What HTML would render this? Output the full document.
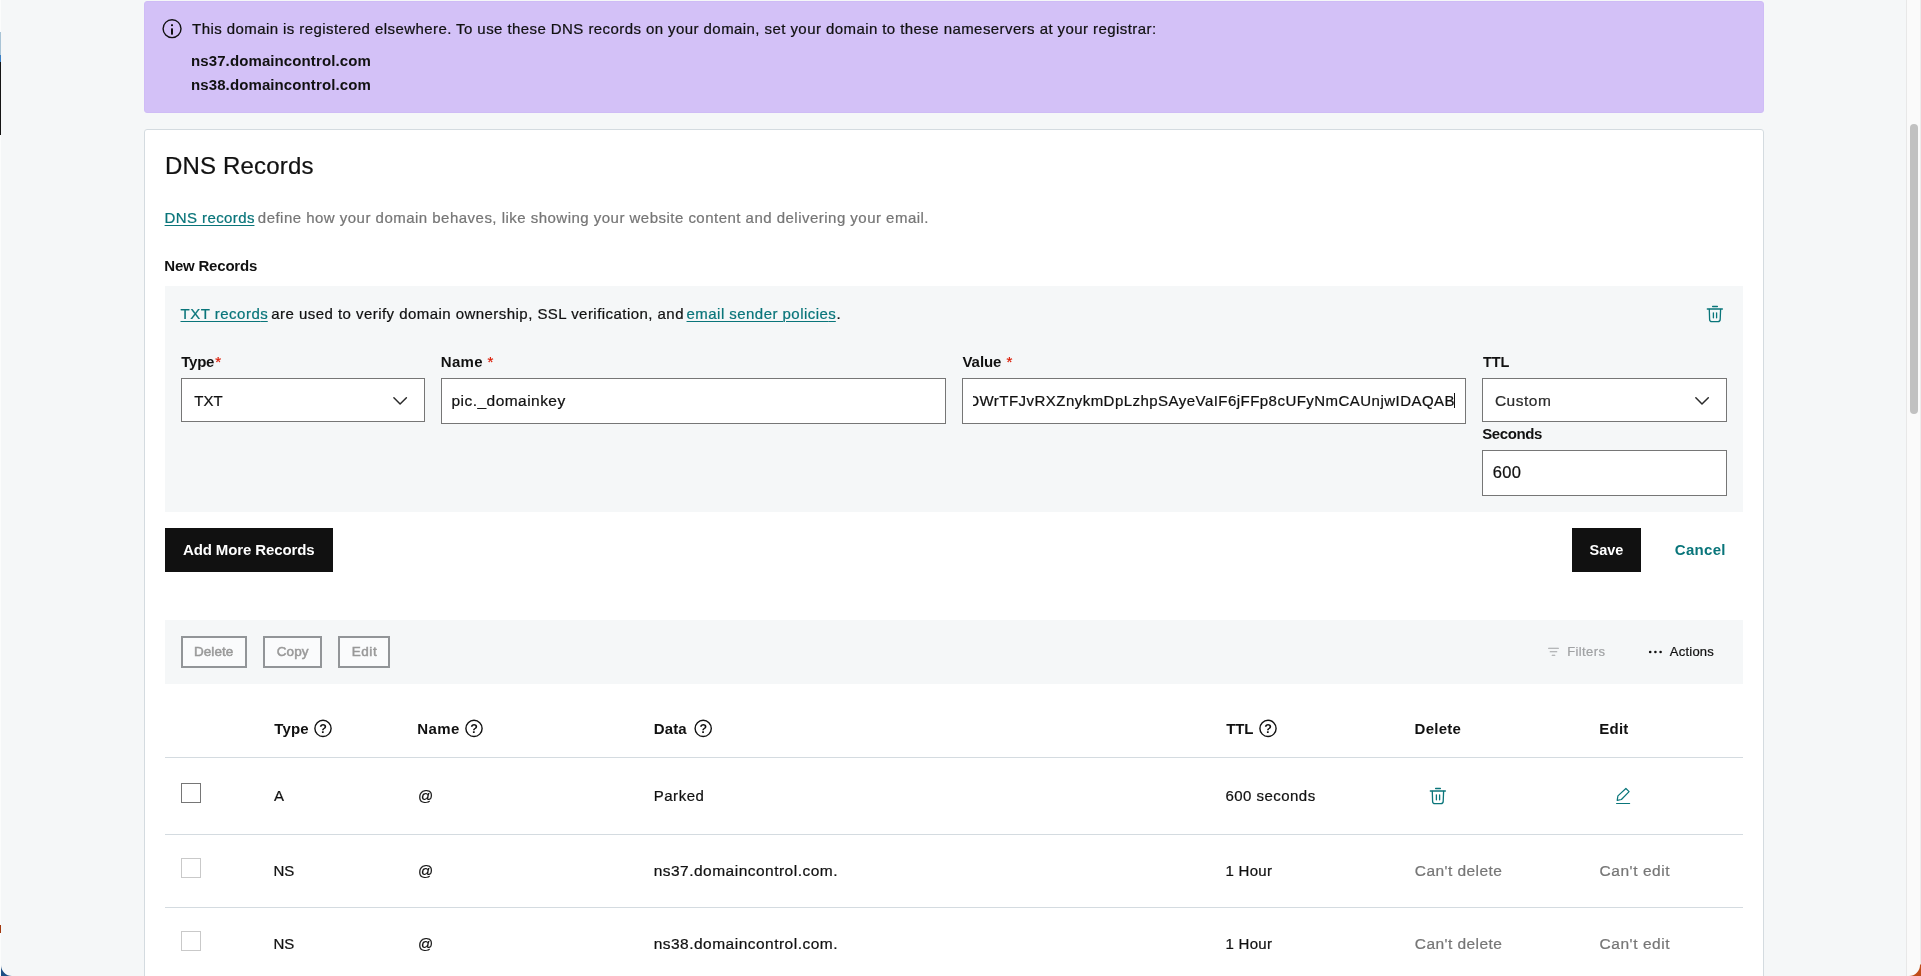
<!DOCTYPE html>
<html lang="en">
<head>
<meta charset="utf-8">
<title>DNS Records</title>
<style>
*{box-sizing:border-box;margin:0;padding:0}
html,body{width:1921px;height:976px;overflow:hidden;background:#f5f7f8}
body{position:relative;font-family:"Liberation Sans",Arial,sans-serif;color:#111;-webkit-font-smoothing:antialiased}
#page{position:absolute;left:0;top:0;width:1921px;height:976px;overflow:hidden;will-change:transform}
.abs,.t,.box{position:absolute}
.t{white-space:pre;margin:0;font-weight:400;display:block;-webkit-text-stroke:0.22px currentColor}
.l{letter-spacing:0}
.t.b{-webkit-text-stroke:0}
a.t{color:#09757a}
.banner{left:144px;top:1px;width:1620px;height:112px;background:#d3c1f7;border:1px solid #cfbcf6;border-radius:3px}
.card{left:144px;top:129px;width:1620px;height:900px;background:#fff;border:1px solid #d4dbe0;border-radius:3px}
.panel{left:165px;top:286px;width:1578px;height:226px;background:#f5f7f8}
.field{background:#fff;border:1px solid #767676}
.btn{background:#111}
.toolbar{left:165px;top:620px;width:1578px;height:64px;background:#f5f7f8}
.obtn{border:2px solid #929598;background:rgba(255,255,255,.5);height:32px;top:636px}
.hr{left:165px;width:1578px;height:1px;background:#d4dbe0}
.cb{left:181px;width:20px;height:20px;background:#fff;border:1px solid #767676}
.cb.dis{border-color:#c9c9c9}
.vclip{left:972.5px;top:379px;width:490px;height:44px;overflow:hidden}
.caret{left:1454px;top:393px;width:1px;height:15px;background:#111}
svg{position:absolute;overflow:visible}
</style>
</head>
<body>
<div id="page">

<!-- window edge + scrollbar -->
<div class="chrome">
<div class="abs" style="left:0;top:0;width:1px;height:976px;background:#fbfcfc"></div>
<div class="abs" style="left:0;top:32px;width:1px;height:23px;background:#a9c4d6"></div>
<div class="abs" style="left:0;top:55px;width:1px;height:7px;background:#3a7fc4"></div>
<div class="abs" style="left:0;top:62px;width:1px;height:73px;background:#141414"></div>
<div class="abs" style="left:0;top:925px;width:1px;height:8px;background:#a33a10"></div>
<div class="abs" style="left:1906px;top:0;width:1px;height:976px;background:#e8e8e8"></div>
<div class="abs" style="left:1907px;top:0;width:14px;height:976px;background:#fafafa"></div>
<div class="abs" style="left:1910px;top:124px;width:8px;height:290px;background:#c1c1c1;border-radius:4px"></div>
<div class="abs" style="left:1920px;top:0;width:1px;height:976px;background:#ececec"></div>
<svg width="12" height="12" style="left:1px;top:964px" viewBox="0 0 12 12"><path d="M0 0 L0 12 L11 12 A11 11 0 0 1 0 1 Z" fill="#1d4f85"/></svg>
<svg width="12" height="12" style="left:1909px;top:964px" viewBox="0 0 12 12"><path d="M12 0 L12 12 L0 12 A11 11 0 0 0 11 1 Z" fill="#c04d1a"/></svg>
</div>

<!-- nameserver notice -->
<section class="alert">
<div class="box banner"></div>
<svg width="22" height="22" style="left:161px;top:18px" viewBox="0 0 22 22"><circle cx="11.05" cy="10.7" r="8.95" fill="none" stroke="#111" stroke-width="1.4"/><rect x="10" y="6.3" width="2" height="1.8" fill="#111"/><rect x="10" y="10.4" width="2" height="6.2" fill="#111"/></svg>
<p class="t" style="left:192.10px;top:19.75px;font-size:15px;line-height:18px;letter-spacing:0.427px;">This domain is registered elsewhere. To use these DNS records on your domain, set your domain to these nameservers at your registrar:</p>
<strong class="t b" style="left:191.00px;top:51.60px;font-size:15px;line-height:18px;letter-spacing:0.107px;font-weight:700;">ns37.domaincontrol.com</strong>
<strong class="t b" style="left:191.00px;top:75.60px;font-size:15px;line-height:18px;letter-spacing:0.107px;font-weight:700;">ns38.domaincontrol.com</strong>
</section>

<!-- DNS records card -->
<main>
<div class="box card"></div>
<header>
<h2 class="t" style="left:164.93px;top:151.00px;font-size:24px;line-height:29px;letter-spacing:0.197px;">DNS Records</h2>
<a class="t" href="#" style="left:164.60px;top:208.75px;font-size:15px;line-height:18px;letter-spacing:0.399px;color:#09757a;text-decoration:underline;text-underline-offset:2px;text-decoration-thickness:1px;">DNS record<span class="l">s</span></a>
<span class="t" style="left:257.82px;top:208.75px;font-size:15px;line-height:18px;letter-spacing:0.480px;color:#767676;">define how your domain behaves, like showing your website content and delivering your email.</span>
</header>

<form action="#">
<div class="box panel"></div>
<div class="box field" style="left:181px;top:378px;width:244px;height:44px"></div>
<div class="box field" style="left:441px;top:378px;width:505px;height:46px"></div>
<div class="box field" style="left:962px;top:378px;width:504px;height:46px"></div>
<div class="box field" style="left:1482px;top:378px;width:245px;height:44px"></div>
<div class="box field" style="left:1482px;top:450px;width:245px;height:46px"></div>
<div class="box caret"></div>
<svg width="16" height="10" style="left:392px;top:396px" viewBox="0 0 16 10"><path d="M1.9 1.8 L8.1 8 L14.4 1.7" fill="none" stroke="#2b2b2b" stroke-width="1.5" stroke-linecap="round" stroke-linejoin="round"/></svg>
<svg width="16" height="10" style="left:1694px;top:396px" viewBox="0 0 16 10"><path d="M1.85 1.8 L8 8 L14.3 1.7" fill="none" stroke="#2b2b2b" stroke-width="1.5" stroke-linecap="round" stroke-linejoin="round"/></svg>
<svg width="20" height="20" style="left:1705px;top:304px" viewBox="0 0 20 20"><g fill="none" stroke="#09757a" stroke-width="1.3" stroke-linecap="round" stroke-linejoin="round"><path d="M7.6 2.5 H12.4"/><path d="M2.4 5.1 H17.3" stroke-width="1.5"/><path d="M4.3 5.4 L4.6 15.4 Q4.7 17.6 6.9 17.6 H12.9 Q15.1 17.6 15.2 15.4 L15.6 5.4"/><path d="M8.4 8.8 V13.8"/><path d="M11.6 8.8 V13.8"/></g></svg>
<h3 class="t b" style="left:164.25px;top:256.60px;font-size:15px;line-height:18px;letter-spacing:-0.200px;font-weight:700;">New Records</h3>
<a class="t" href="#" style="left:180.50px;top:304.75px;font-size:15px;line-height:18px;letter-spacing:0.500px;color:#09757a;text-decoration:underline;text-underline-offset:2px;text-decoration-thickness:1px;">TXT record<span class="l">s</span></a>
<span class="t" style="left:271.31px;top:304.75px;font-size:15px;line-height:18px;letter-spacing:0.454px;">are used to verify domain ownership, SSL verification, and</span>
<a class="t" href="#" style="left:686.54px;top:304.75px;font-size:15px;line-height:18px;letter-spacing:0.460px;color:#09757a;text-decoration:underline;text-underline-offset:2px;text-decoration-thickness:1px;">email sender policie<span class="l">s</span></a>
<span class="t" style="left:836.50px;top:304.75px;font-size:15px;line-height:18px;">.</span>
<label class="t b" style="left:181.25px;top:352.75px;font-size:15px;line-height:18px;letter-spacing:-0.246px;font-weight:700;">Type</label>
<span class="t" style="left:215.17px;top:352.75px;font-size:15px;line-height:18px;color:#db1802;">*</span>
<label class="t b" style="left:440.75px;top:352.75px;font-size:15px;line-height:18px;letter-spacing:0.337px;font-weight:700;">Name</label>
<span class="t" style="left:487.54px;top:352.75px;font-size:15px;line-height:18px;color:#db1802;">*</span>
<label class="t b" style="left:962.50px;top:352.75px;font-size:15px;line-height:18px;letter-spacing:-0.062px;font-weight:700;">Value</label>
<span class="t" style="left:1006.42px;top:352.75px;font-size:15px;line-height:18px;color:#db1802;">*</span>
<label class="t b" style="left:1483.00px;top:353.75px;font-size:14.5px;line-height:17px;letter-spacing:-0.078px;font-weight:700;">TTL</label>
<span class="t" style="left:194.25px;top:391.75px;font-size:15px;line-height:18px;letter-spacing:0.094px;">TXT</span>
<span class="t" style="left:451.50px;top:390.75px;font-size:15.5px;line-height:19px;letter-spacing:0.462px;">pic._domainkey</span>
<div class="box vclip"><span class="t" style="left:-5.13px;top:12.75px;font-size:15px;line-height:18px;letter-spacing:0.465px;">OWrTFJvRXZnykmDpLzhpSAyeVaIF6jFFp8cUFyNmCAUnjwIDAQAB</span></div>
<span class="t" style="left:1494.92px;top:391.25px;font-size:15.5px;line-height:19px;letter-spacing:0.515px;color:#2b2b2b;">Custom</span>
<label class="t b" style="left:1482.31px;top:424.75px;font-size:15px;line-height:18px;letter-spacing:-0.427px;font-weight:700;">Seconds</label>
<span class="t" style="left:1492.87px;top:461.50px;font-size:16.5px;line-height:20px;letter-spacing:0.314px;">600</span>
<div class="actions">
<div class="box btn" style="left:165px;top:528px;width:168px;height:44px"></div>
<div class="box btn" style="left:1572px;top:528px;width:69px;height:44px"></div>
<span class="t b" style="left:183.00px;top:540.50px;font-size:15px;line-height:18px;letter-spacing:-0.117px;color:#fff;font-weight:700;">Add More Records</span>
<span class="t b" style="left:1589.43px;top:541.70px;font-size:14.5px;line-height:17px;letter-spacing:0.048px;color:#fff;font-weight:700;">Save</span>
<span class="t b" style="left:1674.81px;top:540.70px;font-size:15px;line-height:18px;letter-spacing:0.296px;color:#09757a;font-weight:700;">Cancel</span>
</div>
</form>

<div class="tools">
<div class="box toolbar"></div>
<div class="box obtn" style="left:181px;width:66px"></div>
<div class="box obtn" style="left:263px;width:59px"></div>
<div class="box obtn" style="left:338px;width:52px"></div>
<svg width="14" height="10" style="left:1547px;top:647px" viewBox="0 0 14 10"><g stroke="#a0a2a4" stroke-width="1.1" stroke-linecap="round"><path d="M1.6 1.2 H11.4"/><path d="M3.2 4.7 H9.8"/><path d="M5.2 8.2 H7.8"/></g></svg>
<svg width="16" height="4" style="left:1648px;top:650px" viewBox="0 0 16 4"><circle cx="2.2" cy="2" r="1.3" fill="#111"/><circle cx="7.4" cy="2" r="1.3" fill="#111"/><circle cx="12.6" cy="2" r="1.3" fill="#111"/></svg>
<span class="t" style="left:194.00px;top:643.75px;font-size:13.5px;line-height:16px;letter-spacing:0.050px;color:#999;-webkit-text-stroke:0.5px #999;">Delete</span>
<span class="t" style="left:276.77px;top:643.75px;font-size:13.5px;line-height:16px;letter-spacing:0.068px;color:#999;-webkit-text-stroke:0.5px #999;">Copy</span>
<span class="t" style="left:351.75px;top:643.75px;font-size:13.5px;line-height:16px;letter-spacing:0.544px;color:#999;-webkit-text-stroke:0.5px #999;">Edit</span>
<span class="t" style="left:1567.30px;top:644.10px;font-size:13px;line-height:16px;letter-spacing:0.366px;color:#a0a2a4;">Filters</span>
<span class="t" style="left:1669.80px;top:644.10px;font-size:13px;line-height:16px;letter-spacing:0.233px;">Actions</span>
</div>

<div class="records">
<div class="thead">
<span class="t b" style="left:274.25px;top:719.75px;font-size:15px;line-height:18px;letter-spacing:0.170px;font-weight:700;">Type</span>
<span class="t b" style="left:417.25px;top:719.75px;font-size:15px;line-height:18px;letter-spacing:0.420px;font-weight:700;">Name</span>
<span class="t b" style="left:653.70px;top:719.75px;font-size:15px;line-height:18px;letter-spacing:0.167px;font-weight:700;">Data</span>
<span class="t b" style="left:1226.30px;top:719.75px;font-size:15px;line-height:18px;letter-spacing:-0.200px;font-weight:700;">TTL</span>
<span class="t b" style="left:1414.60px;top:719.75px;font-size:15px;line-height:18px;letter-spacing:0.240px;font-weight:700;">Delete</span>
<span class="t b" style="left:1599.30px;top:719.75px;font-size:15px;line-height:18px;letter-spacing:0.218px;font-weight:700;">Edit</span>
<svg class="help" width="20" height="20" style="left:313px;top:718px" viewBox="0 0 20 20"><circle cx="10" cy="10.4" r="8.1" fill="none" stroke="#111" stroke-width="1.4"/><text x="10" y="15.1" text-anchor="middle" font-family="Liberation Sans, Arial, sans-serif" font-size="12.5" font-weight="700" fill="#111">?</text></svg>
<svg class="help" width="20" height="20" style="left:464px;top:718px" viewBox="0 0 20 20"><circle cx="10" cy="10.4" r="8.1" fill="none" stroke="#111" stroke-width="1.4"/><text x="10" y="15.1" text-anchor="middle" font-family="Liberation Sans, Arial, sans-serif" font-size="12.5" font-weight="700" fill="#111">?</text></svg>
<svg class="help" width="20" height="20" style="left:693px;top:718px" viewBox="0 0 20 20"><circle cx="10.2" cy="10.4" r="8.1" fill="none" stroke="#111" stroke-width="1.4"/><text x="10.2" y="15.1" text-anchor="middle" font-family="Liberation Sans, Arial, sans-serif" font-size="12.5" font-weight="700" fill="#111">?</text></svg>
<svg class="help" width="20" height="20" style="left:1258px;top:718px" viewBox="0 0 20 20"><circle cx="10" cy="10.4" r="8.1" fill="none" stroke="#111" stroke-width="1.4"/><text x="10" y="15.1" text-anchor="middle" font-family="Liberation Sans, Arial, sans-serif" font-size="12.5" font-weight="700" fill="#111">?</text></svg>
<div class="box hr" style="top:757px"></div>
</div>
<div class="row">
<div class="box cb" style="top:783px"></div>
<span class="t" style="left:274.00px;top:786.75px;font-size:15px;line-height:18px;">A</span>
<span class="t" style="left:418.12px;top:786.75px;font-size:15px;line-height:18px;">@</span>
<span class="t" style="left:653.70px;top:786.75px;font-size:15px;line-height:18px;letter-spacing:0.540px;">Parked</span>
<span class="t" style="left:1225.50px;top:786.75px;font-size:15px;line-height:18px;letter-spacing:0.460px;">600 seconds</span>
<svg width="20" height="20" style="left:1428px;top:786px" viewBox="0 0 20 20"><g fill="none" stroke="#09757a" stroke-width="1.3" stroke-linecap="round" stroke-linejoin="round"><path d="M7.6 2.5 H12.4"/><path d="M2.4 5.1 H17.3" stroke-width="1.5"/><path d="M4.3 5.4 L4.6 15.4 Q4.7 17.6 6.9 17.6 H12.9 Q15.1 17.6 15.2 15.4 L15.6 5.4"/><path d="M8.4 8.8 V13.8"/><path d="M11.6 8.8 V13.8"/></g></svg>
<svg width="20" height="20" style="left:1613px;top:786px" viewBox="0 0 20 20"><g fill="none" stroke="#09757a" stroke-width="1.2" stroke-linecap="round" stroke-linejoin="round"><path d="M12.9 2.5 L16.1 5.6 L8.4 13.5 L4.2 14.4 L4.9 9.9 Z"/><path d="M3.6 17.5 H16.6"/></g></svg>
<div class="box hr" style="top:834px"></div>
</div>
<div class="row">
<div class="box cb dis" style="top:858px"></div>
<span class="t" style="left:273.50px;top:861.75px;font-size:15px;line-height:18px;letter-spacing:-0.020px;">NS</span>
<span class="t" style="left:418.12px;top:861.75px;font-size:15px;line-height:18px;">@</span>
<span class="t" style="left:653.70px;top:860.75px;font-size:15.5px;line-height:19px;letter-spacing:0.482px;">ns37.domaincontrol.com.</span>
<span class="t" style="left:1225.60px;top:861.75px;font-size:15px;line-height:18px;letter-spacing:0.260px;">1 Hour</span>
<span class="t" style="left:1414.77px;top:860.75px;font-size:15.5px;line-height:19px;letter-spacing:0.439px;color:#767676;">Can't delete</span>
<span class="t" style="left:1599.47px;top:860.75px;font-size:15.5px;line-height:19px;letter-spacing:0.570px;color:#767676;">Can't edit</span>
<div class="box hr" style="top:907px"></div>
</div>
<div class="row">
<div class="box cb dis" style="top:931px"></div>
<span class="t" style="left:273.50px;top:934.75px;font-size:15px;line-height:18px;letter-spacing:-0.020px;">NS</span>
<span class="t" style="left:418.12px;top:934.75px;font-size:15px;line-height:18px;">@</span>
<span class="t" style="left:653.70px;top:933.75px;font-size:15.5px;line-height:19px;letter-spacing:0.482px;">ns38.domaincontrol.com.</span>
<span class="t" style="left:1225.60px;top:934.75px;font-size:15px;line-height:18px;letter-spacing:0.260px;">1 Hour</span>
<span class="t" style="left:1414.77px;top:933.75px;font-size:15.5px;line-height:19px;letter-spacing:0.439px;color:#767676;">Can't delete</span>
<span class="t" style="left:1599.47px;top:933.75px;font-size:15.5px;line-height:19px;letter-spacing:0.570px;color:#767676;">Can't edit</span>
</div>
</div>
</main>

</div>
</body>
</html>
